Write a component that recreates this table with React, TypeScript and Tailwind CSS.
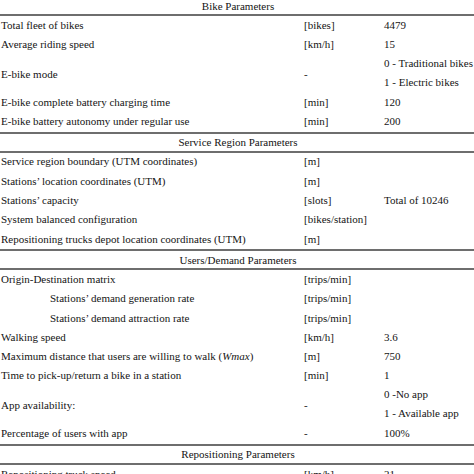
type Row = {
  label: React.ReactNode;
  unit?: string;
  value?: string[];
  indent?: boolean;
};

const sections: { title: string; rows: Row[] }[] = [
  {
    title: "Bike Parameters",
    rows: [
      { label: "Total fleet of bikes", unit: "[bikes]", value: ["4479"] },
      { label: "Average riding speed", unit: "[km/h]", value: ["15"] },
      {
        label: "E-bike mode",
        unit: "-",
        value: ["0 - Traditional bikes", "1 - Electric bikes"],
      },
      { label: "E-bike complete battery charging time", unit: "[min]", value: ["120"] },
      { label: "E-bike battery autonomy under regular use", unit: "[min]", value: ["200"] },
    ],
  },
  {
    title: "Service Region Parameters",
    rows: [
      { label: "Service region boundary (UTM coordinates)", unit: "[m]" },
      { label: "Stations\u2019 location coordinates (UTM)", unit: "[m]" },
      { label: "Stations\u2019 capacity", unit: "[slots]", value: ["Total of 10246"] },
      { label: "System balanced configuration", unit: "[bikes/station]" },
      { label: "Repositioning trucks depot location coordinates (UTM)", unit: "[m]" },
    ],
  },
  {
    title: "Users/Demand Parameters",
    rows: [
      { label: "Origin-Destination matrix", unit: "[trips/min]" },
      { label: "Stations\u2019 demand generation rate", unit: "[trips/min]", indent: true },
      { label: "Stations\u2019 demand attraction rate", unit: "[trips/min]", indent: true },
      { label: "Walking speed", unit: "[km/h]", value: ["3.6"] },
      {
        label: (
          <>
            Maximum distance that users are willing to walk (<i>Wmax</i>)
          </>
        ),
        unit: "[m]",
        value: ["750"],
      },
      { label: "Time to pick-up/return a bike in a station", unit: "[min]", value: ["1"] },
      {
        label: "App availability:",
        unit: "-",
        value: ["0 -No app", "1 - Available app"],
      },
      { label: "Percentage of users with app", unit: "-", value: ["100%"] },
    ],
  },
  {
    title: "Repositioning Parameters",
    rows: [{ label: "Repositioning truck speed", unit: "[km/h]", value: ["21"] }],
  },
];

function Rule() {
  return <div className="h-[2px] bg-[#6e6e6e]" />;
}

function DataRow({ row }: { row: Row }) {
  const lines = row.value ?? [];
  const tall = lines.length > 1;
  return (
    <div
      className={
        "grid grid-cols-[304px_80px_1fr] items-center pb-[2px] " +
        (tall ? "h-[38.6px]" : "h-[19.3px]")
      }
    >
      <div className={row.indent ? "pl-[50px]" : "pl-[1px]"}>{row.label}</div>
      <div>{row.unit}</div>
      <div className="flex flex-col">
        {lines.map((l) => (
          <span key={l} className={tall ? "h-[19.3px] leading-[17px]" : ""}>
            {l}
          </span>
        ))}
      </div>
    </div>
  );
}

export default function App() {
  return (
    <div
      className="h-[474px] w-[474px] overflow-hidden bg-white text-[11px] leading-[14px] text-[#141414]"
      style={{ fontFamily: '"Liberation Serif", "Times New Roman", serif' }}
    >
      <div className="-mt-[3px]">
        {sections.map((s, i) => (
          <div key={s.title}>
            {i > 0 && <Rule />}
            <div className="flex h-[17px] items-center justify-center pl-[2px]">
              {s.title}
            </div>
            <Rule />
            {s.rows.map((r, j) => (
              <DataRow key={j} row={r} />
            ))}
          </div>
        ))}
      </div>
    </div>
  );
}
